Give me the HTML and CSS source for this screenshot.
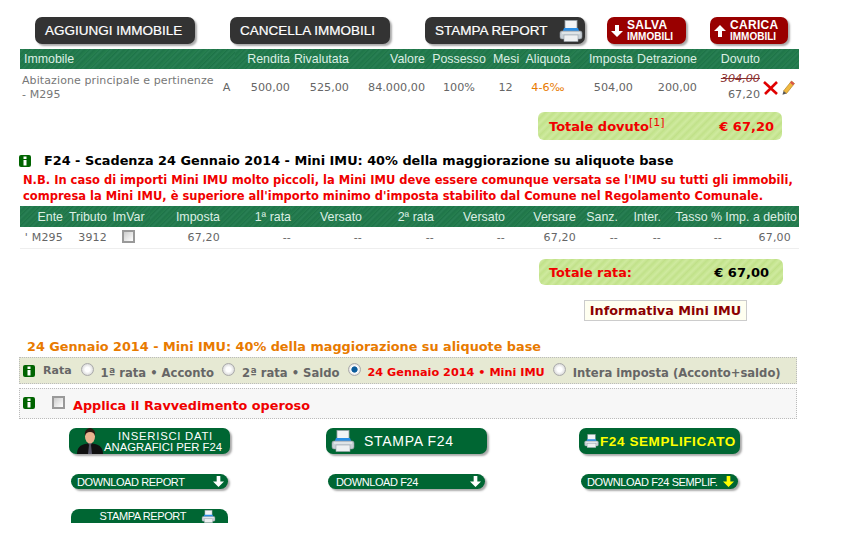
FILE: index.html
```html
<!DOCTYPE html>
<html lang="it">
<head>
  <meta charset="UTF-8">
  <title>Calcolo IMU</title>
  <link rel="stylesheet" href="styles.css">
</head>
<body>
  <svg class="defs" width="0" height="0">
    <symbol id="printer" viewBox="0 0 24 22">
      <rect x="6" y="0.5" width="12" height="9" fill="#f2f4f6" stroke="#9aa3ab" stroke-width="0.8"/>
      <path d="M5 8h14l1.500 4h-17z" fill="#2b8fe6"/>
      <rect x="1" y="11" width="22" height="8" rx="2" fill="#c9d0d6" stroke="#8d969e" stroke-width="0.6"/>
      <rect x="5" y="15" width="14" height="6.500" fill="#eef0f2" stroke="#9aa3ab" stroke-width="0.6"/>
      <rect x="3" y="12.500" width="18" height="1" fill="#f5f7f8"/>
    </symbol>
    <symbol id="arrow" viewBox="0 0 12 12">
      <path d="M4 0h4v6h4l-6 6-6-6h4z" fill="#fff"/>
    </symbol>
    <symbol id="info" viewBox="0 0 12 12">
      <rect width="12" height="12" rx="2" fill="#006400"/>
      <rect x="4.500" y="1.500" width="3" height="2.500" fill="#fff"/>
      <rect x="4.500" y="5" width="3" height="5.500" fill="#fff"/>
    </symbol>
  </svg>

  <div class="page">
    <div class="toolbar">
      <a class="btn btn-dark w-160">AGGIUNGI IMMOBILE</a>
      <a class="btn btn-dark w-160">CANCELLA IMMOBILI</a>
      <a class="btn btn-dark w-160 btn-print">STAMPA REPORT <svg class="ico-print"><use href="#printer"/></svg></a>
      <a class="btn btn-red"><svg class="ico-arrow"><use href="#arrow"/></svg><span class="two-lines">SALVA<small>IMMOBILI</small></span></a>
      <a class="btn btn-red btn-load"><svg class="ico-arrow up"><use href="#arrow"/></svg><span class="two-lines">CARICA<small>IMMOBILI</small></span></a>
    </div>

    <table class="grid grid-immobili">
      <colgroup>
        <col class="c198"><col class="c17"><col class="c55"><col class="c59"><col class="c76"><col class="c68"><col class="c25"><col class="c60"><col class="c55"><col class="c64"><col class="c63"><col class="c39">
      </colgroup>
      <thead>
        <tr>
          <th class="left">Immobile</th><th></th><th>Rendita</th><th>Rivalutata</th><th>Valore</th>
          <th class="mid">Possesso</th><th class="mid">Mesi</th><th class="mid">Aliquota</th>
          <th>Imposta</th><th>Detrazione</th><th>Dovuto</th><th></th>
        </tr>
      </thead>
      <tbody>
        <tr>
          <td class="left desc">Abitazione principale e pertinenze - M295</td>
          <td class="mid">A</td><td>500,00</td><td>525,00</td><td>84.000,00</td>
          <td class="mid">100%</td><td class="mid">12</td><td class="mid orange">4-6‰</td>
          <td>504,00</td><td>200,00</td>
          <td class="dovuto"><s>304,00</s><br>67,20</td>
          <td class="actions">
            <svg width="15" height="14" viewBox="0 0 15 14"><path d="M1 1l13 12M14 1L2 13" stroke="#e00000" stroke-width="2.600" fill="none"/></svg>
            <svg width="13" height="15" viewBox="0 0 13 15"><path d="M9.500 1l3 2.500-8 10-3-2.500z" fill="#f0b840" stroke="#a87a1c" stroke-width="0.600"/><path d="M1.500 11l3 2.500-4 1.300z" fill="#555"/><path d="M9.500 1l3 2.500-1.500 1.800-3-2.500z" fill="#d9534a"/></svg>
          </td>
        </tr>
      </tbody>
    </table>

    <div class="total total-due">
      <span>Totale dovuto<sup>[1]</sup></span><span>€ 67,20</span>
    </div>

    <h3 class="f24-title"><svg class="ico-info"><use href="#info"/></svg>F24 - Scadenza 24 Gennaio 2014 - Mini IMU: 40% della maggiorazione su aliquote base</h3>
    <p class="note">N.B. In caso di importi Mini IMU molto piccoli, la Mini IMU deve essere comunque versata se l'IMU su tutti gli immobili, compresa la Mini IMU, è superiore all'importo minimo d'imposta stabilito dal Comune nel Regolamento Comunale.</p>

    <table class="grid grid-f24">
      <colgroup>
        <col class="c43"><col class="c44"><col class="c43"><col class="c70"><col class="c71"><col class="c71"><col class="c72"><col class="c71"><col class="c71"><col class="c42"><col class="c43"><col class="c61"><col class="c77">
      </colgroup>
      <thead>
        <tr>
          <th>Ente</th><th>Tributo</th><th class="mid">ImVar</th><th>Imposta</th><th>1ª rata</th><th>Versato</th><th>2ª rata</th><th>Versato</th><th>Versare</th><th>Sanz.</th><th>Inter.</th><th>Tasso %</th><th class="last">Imp. a debito</th>
        </tr>
      </thead>
      <tbody>
        <tr>
          <td>' M295</td><td>3912</td><td class="mid"><input type="checkbox" class="check"></td><td>67,20</td><td>--</td><td>--</td><td>--</td><td>--</td><td>67,20</td><td>--</td><td>--</td><td>--</td><td class="pad-right">67,00</td>
        </tr>
      </tbody>
    </table>

    <div class="total total-rate">
      <span>Totale rata:</span><span class="black">€ 67,00</span>
    </div>

    <a class="info-link">Informativa Mini IMU</a>

    <h4 class="orange-title">24 Gennaio 2014 - Mini IMU: 40% della maggiorazione su aliquote base</h4>

    <div class="rate-bar">
      <svg class="ico-info"><use href="#info"/></svg>
      <span class="rate-label">Rata</span>
      <label><input type="radio" name="rata" class="radio">1ª rata • Acconto</label>
      <label><input type="radio" name="rata" class="radio">2ª rata • Saldo</label>
      <label class="active"><input type="radio" name="rata" class="radio" checked>24 Gennaio 2014 • Mini IMU</label>
      <label><input type="radio" name="rata" class="radio">Intera imposta (Acconto+saldo)</label>
    </div>

    <div class="ravv-bar">
      <svg class="ico-info"><use href="#info"/></svg>
      <input type="checkbox" class="check check-big">
      <span>Applica il Ravvedimento operoso</span>
    </div>

    <div class="actions-grid">
      <a class="btn btn-green btn-person">
        <svg class="ico-person" viewBox="0 0 26 26"><path d="M0 26c0-6 3-9 8-10l5-1 5 1c5 1 8 4 8 10z" fill="#111"/><path d="M11 15h4l-1 2 1 9h-4l1-9z" fill="#556"/><ellipse cx="13" cy="8.500" rx="5" ry="7" fill="#eab48f"/><path d="M8 8c-1-6 3-8 5-8s6 2 5 8c-1-3-2-4-5-4s-4 1-5 4z" fill="#2b1a12"/></svg>
        <span class="person-text"><span class="person-top">INSERISCI DATI</span>ANAGRAFICI PER F24</span>
      </a>
      <a class="btn btn-green btn-f24"><svg class="ico-print big"><use href="#printer"/></svg>STAMPA F24</a>
      <a class="btn btn-green btn-simple yellow"><svg class="ico-print small"><use href="#printer"/></svg>F24 SEMPLIFICATO</a>

      <a class="pill">DOWNLOAD REPORT <svg class="ico-pill"><use href="#arrow"/></svg></a>
      <a class="pill inset">DOWNLOAD F24 <svg class="ico-pill"><use href="#arrow"/></svg></a>
      <a class="pill yellow">DOWNLOAD F24 SEMPLIF.<svg class="ico-pill" viewBox="0 0 12 12"><path d="M4 0h4v6h4l-6 6-6-6h4z" fill="#ffff00"/></svg></a>

      <a class="pill pill-print">STAMPA REPORT <svg class="ico-print tiny"><use href="#printer"/></svg></a>
    </div>
  </div>
</body>
</html>
```

FILE: styles.css
```css
html, body { margin: 0; background: #fff; }
body { font-family: "DejaVu Sans", Verdana, sans-serif; font-size: 11px; color: #666; overflow: hidden; height: 540px; }
.defs { position: absolute; }
.page { width: 780px; padding: 17px 0 0 19px; }
a { display: block; }
svg { display: block; }

/* top buttons */
.toolbar { display: flex; height: 27px; margin-bottom: 5px; padding-left: 16px; }
.btn { box-sizing: border-box; display: flex; align-items: center; border-radius: 7px; color: #fff; box-shadow: 2px 2px 2px #aaa; font-family: "Liberation Sans", Arial, sans-serif; white-space: nowrap; }
.btn-dark { background: #333; font-size: 13.500px; padding-left: 10px; margin-right: 35px; -webkit-text-stroke: 0.2px #fff; }
.w-160 { width: 160px; }
.btn-print { justify-content: space-between; padding-right: 2px; margin-right: 22px; }
.btn-red { background: #990000; width: 79px; font-weight: bold; font-size: 12px; padding-left: 4px; margin-right: 24px; }
.btn-load { width: 78px; margin-right: 0; }
.two-lines { line-height: 11px; margin-left: 4px; letter-spacing: 0.3px; }
.two-lines small { display: block; font-size: 10px; letter-spacing: 0; }
.ico-print { width: 24px; height: 22px; }
.ico-arrow { width: 12px; height: 12px; }
.ico-arrow.up { transform: rotate(180deg); }

/* tables */
.grid { table-layout: fixed; border-collapse: collapse; width: 779px; margin-left: 1px; }
.grid th { background: #217a4e repeating-linear-gradient(135deg, #1d7247 0, #2a8055 2px, #1f7549 4px, #27804f 7px); color: #dcefe4; font: normal 12.400px "Liberation Sans", Arial, sans-serif; text-align: right; padding: 0; height: 20px; white-space: nowrap; overflow: visible; }
.grid td { text-align: right; padding: 0; white-space: nowrap; }
.grid .left { text-align: left; padding-left: 2px; }
.grid th.left { padding-left: 4px; }
.grid .mid { text-align: center; }
.grid .desc { white-space: normal; line-height: 14px; letter-spacing: 0.1px; color: #777; }
.grid-immobili td { height: 31px; padding-top: 3px; font-size: 11.200px; }
.grid-immobili .desc { font-size: 11px; }
.orange { color: #e87a00; }
.grid-immobili .dovuto { line-height: 16px; padding-top: 2px; }
.dovuto s { font-style: italic; color: #8a3030; }
.grid .actions { padding-left: 3px; text-align: left; }
.actions svg { display: inline-block; vertical-align: middle; }
.c198 { width: 198px; } .c17 { width: 17px; } .c25 { width: 25px; } .c39 { width: 39px; }
.c42 { width: 42px; } .c43 { width: 43px; } .c44 { width: 44px; } .c55 { width: 55px; }
.c59 { width: 59px; } .c60 { width: 60px; } .c61 { width: 61px; } .c63 { width: 63px; }
.c64 { width: 64px; } .c68 { width: 68px; } .c70 { width: 70px; } .c71 { width: 71px; }
.c72 { width: 72px; } .c76 { width: 76px; } .c77 { width: 77px; }
.grid-f24 th { height: 21px; }
.grid-f24 th.last { padding-right: 2px; }
.grid-f24 td { height: 21px; border-bottom: 1px solid #eee; letter-spacing: 0.2px; }
.grid-f24 .pad-right { padding-right: 8px; }

/* totals */
.total { box-sizing: border-box; display: flex; justify-content: space-between; align-items: center; width: 244px; border-radius: 6px; color: #f00000; font-weight: bold; background: #c5e58f repeating-linear-gradient(135deg, #c2e38b 0, #cfea9f 3px, #c0e088 6px); }
.total-due { height: 28px; margin: 9px 0 0 519px; padding: 0 8px 0 11px; font-size: 13px; }
.total-due sup { font-size: 11px; font-weight: normal; line-height: 0; }
.total-rate { height: 26px; margin: 10px 0 0 520px; padding: 0 14px 0 10px; font-size: 12.800px; }
.total-rate .black { color: #000; font-size: 13px; }

/* headings */
.f24-title { display: flex; align-items: center; margin: 14px 0 0; height: 13px; font-size: 12.850px; color: #000; }
.ico-info { width: 12px; height: 12px; flex: none; }
.f24-title .ico-info { margin-right: 13px; }
.note { margin: 5px 0 2px 4px; font-size: 11.500px; font-weight: bold; line-height: 16px; color: #f00000; width: 776px; }
.info-link { box-sizing: border-box; width: 163px; height: 21px; margin: 15px 0 0 565px; border: 1px solid #ccc; background: #fffff0; color: #8b0000; font-weight: bold; font-size: 12.800px; line-height: 20px; text-align: center; }
.orange-title { margin: 18px 0 2px 8px; font-size: 12.820px; line-height: 16px; color: #e87a00; }

/* rate and ravvedimento bars */
.rate-bar { box-sizing: border-box; display: flex; align-items: center; width: 778px; height: 27px; padding-left: 3px; background: #e6e9d3; border: 1px dotted #bbb; font-size: 11.600px; font-weight: bold; color: #666; white-space: nowrap; }
.rate-bar label { display: flex; align-items: center; margin-right: 8px; padding-top: 4px; }
.rate-bar .active { color: #f00000; font-size: 11.250px; }
.rate-label { margin: 0 9px 0 8px; font-size: 11px; }
.radio { appearance: none; width: 13px; height: 13px; margin: 0 7px 7px 0; border-radius: 50%; border: 1px solid #aaa; background: radial-gradient(circle, #fff 30%, #ccc 90%); }
.radio:checked { background: radial-gradient(circle, #0a5c9c 35%, #fff 45%, #ccc 90%); }
.ravv-bar { box-sizing: border-box; display: flex; align-items: center; width: 778px; height: 31px; margin-top: 4px; padding: 4px 0 0 3px; background: #f7f7f7; border: 1px dotted #bbb; font-size: 12.800px; font-weight: bold; color: #f00000; }
.ravv-bar .ico-info { align-self: flex-start; margin-top: 4px; }
.check { appearance: none; display: block; box-sizing: border-box; width: 13px; height: 13px; margin: 0 auto 3px; border: 2px solid #999; background: linear-gradient(135deg, #ccc, #fff); }
.check-big { margin: 0 8px 6px 17px; }

/* bottom actions */
.actions-grid { display: grid; grid-template-columns: 257px 253px 161px; grid-auto-rows: min-content; row-gap: 20px; margin: 9px 0 0 50px; }
.btn-green { background: #006633; width: 161px; height: 26px; }
.person-text { flex: 1; padding: 2px 7px 0 0; font-size: 11.300px; line-height: 11px; text-align: center; }
.person-top { display: block; padding-left: 5px; letter-spacing: 0.750px; }
.ico-person { width: 26px; height: 26px; margin-left: 8px; flex: none; }
.btn-f24 { font-size: 14px; letter-spacing: 0.7px; padding-left: 5px; }
.ico-print.big { width: 24px; height: 22px; margin-right: 9px; }
.btn-simple { font-size: 13.500px; font-weight: bold; letter-spacing: 0.6px; padding-left: 5px; }
.ico-print.small { width: 15px; height: 14px; margin-right: 1px; }
.yellow { color: #ffff00; }
.pill { box-sizing: border-box; display: flex; align-items: center; justify-content: space-between; width: 157px; height: 15px; margin-left: 2px; padding: 0 4px 0 6px; border-radius: 8px; background: #006633; color: #fff; box-shadow: 2px 2px 2px #aaa; font: 11px "Liberation Sans", Arial, sans-serif; letter-spacing: -0.400px; white-space: nowrap; }
.pill.inset { padding-left: 8px; }
.ico-pill { width: 11px; height: 11px; flex: none; }
.pill-print { height: 14px; justify-content: flex-end; border-radius: 8px 8px 0 0; box-shadow: none; padding-right: 12px; grid-column: 1; }
.ico-print.tiny { width: 15px; height: 13px; margin-left: 15px; }
```
